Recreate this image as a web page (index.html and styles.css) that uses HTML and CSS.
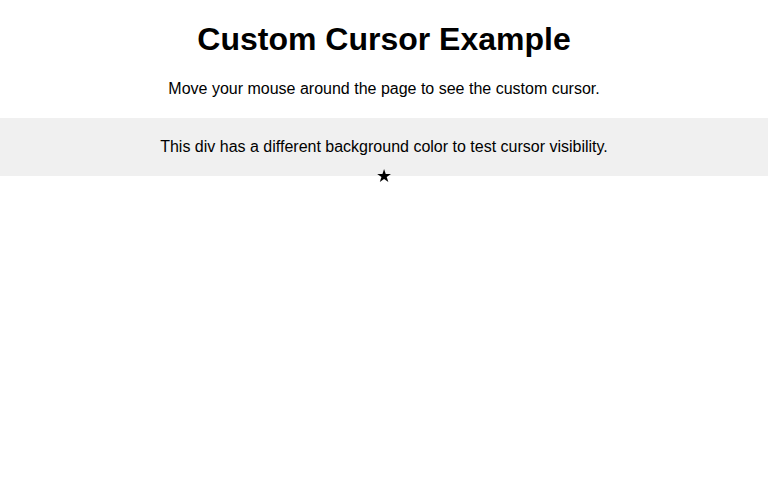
FILE: index.html
```html
<!doctype html>
<html>

<head>
    <meta charset="UTF-8">
    <title>Custom Cursor Example</title>
    <link rel="stylesheet" href="styles.css">
</head>

<body>
    <h1>Custom Cursor Example</h1>
    <p>Move your mouse around the page to see the custom cursor.</p>
    <div class="test-area">This div has a different background color to test cursor visibility.</div>

    <!-- star that follows the mouse -->
    <div id="cursor" class="cursor" style="left: 384px; top: 176px;">★</div>

    <script src="cursor.js"></script>
</body>

</html>
```

FILE: styles.css
```css
/* Page layout */

body {
    margin: 0;
    font-family: "Liberation Sans", Arial, Helvetica, sans-serif;
    text-align: center;
    color: #000;
    background: #fff;
    cursor: none;
}

h1 {
    font-size: 2em;
    margin: 0.67em 0;
}

p {
    margin: 1em 0 0;
}

.test-area {
    margin-top: 20px;
    padding: 20px;
    background-color: #f0f0f0;
}

/* Custom cursor */

.cursor {
    position: fixed;
    font-family: "DejaVu Sans", sans-serif;
    font-size: 18px;
    line-height: 1;
    transform: translate(-50%, -50%);
    pointer-events: none;
}
```

FILE: cursor.js
```js
// move the star with the mouse
let cursor = document.querySelector("#cursor");

document.addEventListener("mousemove", (e) => {
    cursor.style.left = e.clientX + "px";
    cursor.style.top = e.clientY + "px";
});
```
